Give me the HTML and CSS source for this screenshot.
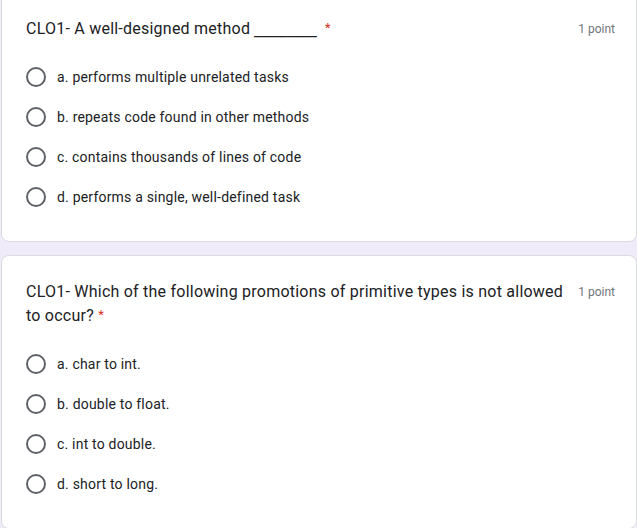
FILE: index.html
```html
<!DOCTYPE html>
<html lang="en">
<head>
    <meta charset="UTF-8">
    <meta name="viewport" content="width=device-width, initial-scale=1.0">
    <title>Quiz</title>
    <link rel="stylesheet" href="styles.css">
</head>
<body>
    <main class="form">
        <div class="card">
            <div class="card-head">
                <div class="question">CLO1- A well-designed method <span class="blank">_______</span>&nbsp; <span class="req">*</span></div>
                <div class="points">1 point</div>
            </div>
            <div class="options">
                <label class="option"><span class="radio"></span><span>a. performs multiple unrelated tasks</span></label>
                <label class="option"><span class="radio"></span><span>b. repeats code found in other methods</span></label>
                <label class="option"><span class="radio"></span><span>c. contains thousands of lines of code</span></label>
                <label class="option"><span class="radio"></span><span>d. performs a single, well-defined task</span></label>
            </div>
        </div>

        <div class="card">
            <div class="card-head">
                <div class="question">CLO1- Which of the following promotions of primitive types is not allowed to occur? <span class="req">*</span></div>
                <div class="points">1 point</div>
            </div>
            <div class="options">
                <label class="option"><span class="radio"></span><span>a. char to int.</span></label>
                <label class="option"><span class="radio"></span><span>b. double to float.</span></label>
                <label class="option"><span class="radio"></span><span>c. int to double.</span></label>
                <label class="option"><span class="radio"></span><span>d. short to long.</span></label>
            </div>
        </div>
    </main>
</body>
</html>
```

FILE: styles.css
```css
body {
    margin: 0;
    padding: 0;
    background: #f0ebf8;
    font-family: Roboto, Arial, sans-serif;
    color: #202124;
}

.form {
    display: flex;
    flex-direction: column;
    gap: 13px;
    margin-top: -8px;
    padding-left: 1px;
}

.card {
    background: #fff;
    border: 1px solid #dadce0;
    border-radius: 8px;
    padding: 24px 21px 24px 24px;
    width: 589px;
}

.card-head {
    display: flex;
    align-items: flex-start;
    margin-bottom: 16px;
}

.question {
    flex: 1;
    font-size: 16px;
    line-height: 24px;
    letter-spacing: 0.23px;
    padding-right: 12px;
}

.blank {
    font-family: "Liberation Sans", Arial, sans-serif;
    letter-spacing: 0;
}

.req {
    color: #d93025;
    font-size: 13px;
    line-height: 1;
    vertical-align: 2px;
}

.points {
    font-size: 12px;
    line-height: 24px;
    color: #70757a;
    white-space: nowrap;
}

.options {
    display: flex;
    flex-direction: column;
}

.option {
    display: flex;
    align-items: center;
    height: 40px;
    font-size: 14px;
    letter-spacing: 0.2px;
}

.radio {
    width: 16px;
    height: 16px;
    border: 2px solid #5f6368;
    border-radius: 50%;
    margin-right: 11px;
    flex-shrink: 0;
}
```
